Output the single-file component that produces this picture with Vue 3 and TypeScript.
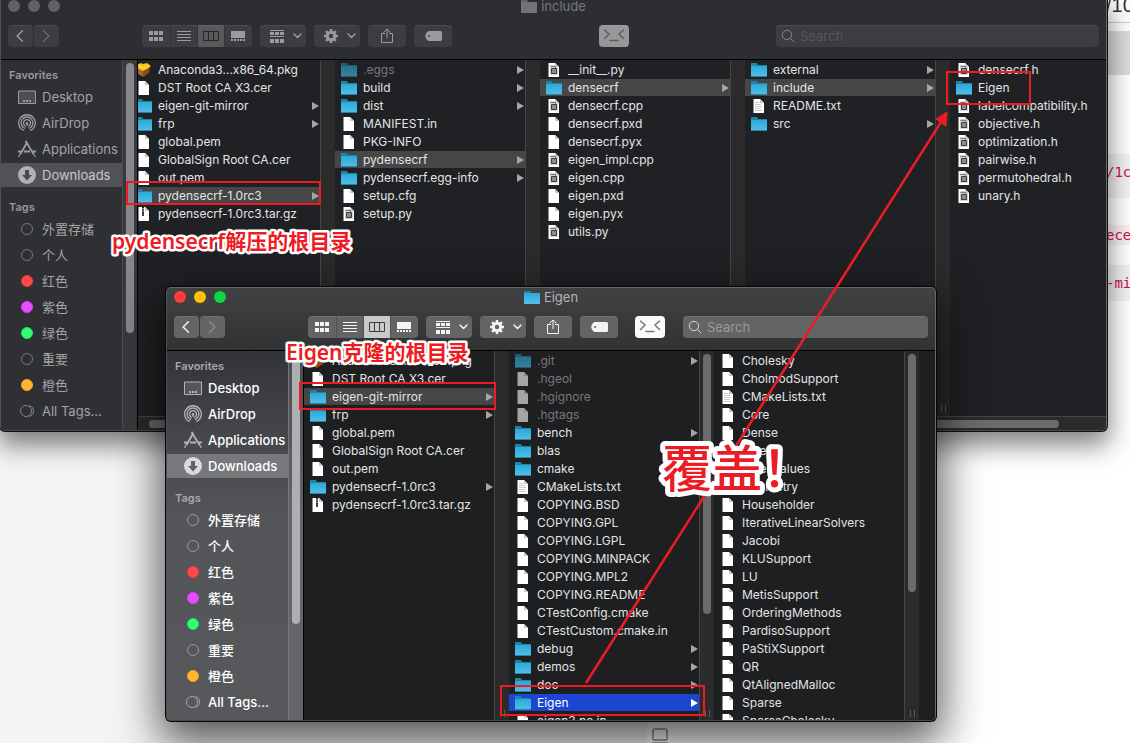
<script setup lang="ts">
type Kind = 'folder' | 'file' | 'code' | 'text' | 'zip' | 'pkg'
interface Entry { name: string; kind: Kind; arrow?: boolean; dim?: boolean; selected?: boolean; active?: boolean }
interface Column { entries: Entry[]; bar?: 'long' | 'short'; grip?: boolean }
interface FinderWindow { id: string; title: string; front: boolean; columns: Column[] }

const dir = (name: string, extra: Partial<Entry> = {}): Entry => ({ name, kind: 'folder', arrow: true, ...extra })
const doc = (name: string, kind: Kind = 'file', extra: Partial<Entry> = {}): Entry => ({ name, kind, ...extra })
const docs = (...names: string[]): Entry[] => names.map((n) => doc(n))

const downloads = (selected: string): Entry[] => [
  doc('Anaconda3...x86_64.pkg', 'pkg'),
  doc('DST Root CA X3.cer'),
  dir('eigen-git-mirror', { selected: selected === 'eigen-git-mirror' }),
  dir('frp'),
  ...docs('global.pem', 'GlobalSign Root CA.cer', 'out.pem'),
  dir('pydensecrf-1.0rc3', { selected: selected === 'pydensecrf-1.0rc3' }),
  doc('pydensecrf-1.0rc3.tar.gz', 'zip'),
]

const windows: FinderWindow[] = [
  {
    id: 'back',
    title: 'include',
    front: false,
    columns: [
      { entries: downloads('pydensecrf-1.0rc3') },
      {
        entries: [
          dir('.eggs', { dim: true }), dir('build'), dir('dist'),
          ...docs('MANIFEST.in', 'PKG-INFO'),
          dir('pydensecrf', { selected: true }), dir('pydensecrf.egg-info'),
          doc('setup.cfg'), doc('setup.py', 'code'),
        ],
      },
      {
        entries: [
          doc('__init__.py', 'code'), dir('densecrf', { selected: true }), doc('densecrf.cpp', 'code'),
          ...docs('densecrf.pxd', 'densecrf.pyx'),
          doc('eigen_impl.cpp', 'code'), doc('eigen.cpp', 'code'),
          ...docs('eigen.pxd', 'eigen.pyx'), doc('utils.py', 'code'),
        ],
      },
      { grip: true, entries: [dir('external'), dir('include', { selected: true }), doc('README.txt', 'text'), dir('src')] },
      {
        entries: [
          doc('densecrf.h', 'code'), dir('Eigen', { arrow: false }),
          ...['labelcompatibility.h', 'objective.h', 'optimization.h', 'pairwise.h', 'permutohedral.h', 'unary.h'].map((n) => doc(n, 'code')),
        ],
      },
    ],
  },
  {
    id: 'front',
    title: 'Eigen',
    front: true,
    columns: [
      { grip: true, entries: downloads('eigen-git-mirror') },
      {
        bar: 'long',
        grip: true,
        entries: [
          dir('.git', { dim: true }),
          ...['.hgeol', '.hgignore', '.hgtags'].map((n) => doc(n, 'file', { dim: true })),
          dir('bench'), dir('blas'), dir('cmake'), doc('CMakeLists.txt', 'text'),
          ...docs('COPYING.BSD', 'COPYING.GPL', 'COPYING.LGPL', 'COPYING.MINPACK', 'COPYING.MPL2', 'COPYING.README', 'CTestConfig.cmake', 'CTestCustom.cmake.in'),
          dir('debug'), dir('demos'), dir('doc'), dir('Eigen', { active: true }), doc('eigen3.pc.in'),
        ],
      },
      {
        bar: 'short',
        grip: true,
        entries: [
          ...docs('Cholesky', 'CholmodSupport'), doc('CMakeLists.txt', 'text'),
          ...docs('Core', 'Dense', 'Eigen', 'Eigenvalues', 'Geometry', 'Householder', 'IterativeLinearSolvers', 'Jacobi', 'KLUSupport', 'LU',
            'MetisSupport', 'OrderingMethods', 'PardisoSupport', 'PaStiXSupport', 'QR', 'QtAlignedMalloc', 'Sparse', 'SparseCholesky'),
        ],
      },
      { entries: [] },
    ],
  },
]

const favorites = ['Desktop', 'AirDrop', 'Applications', 'Downloads']
const tags = [
  { name: '外置存储', color: 'none' },
  { name: '个人', color: 'none' },
  { name: '红色', color: 'red' },
  { name: '紫色', color: 'purple' },
  { name: '绿色', color: 'green' },
  { name: '重要', color: 'none' },
  { name: '橙色', color: 'orange' },
]
</script>

<template>
  <main class="desktop">
    <svg class="defs" width="0" height="0" aria-hidden="true">
      <defs>
        <linearGradient id="folder-fill" x1="0" y1="0" x2="0" y2="1">
          <stop offset="0" stop-color="#27aadb" />
          <stop offset="1" stop-color="#58bfe2" />
        </linearGradient>
      </defs>
    </svg>

    <article class="page">
      <p class="heading">/10</p>
      <div class="bar"></div>
      <pre class="code tall">/1c</pre>
      <p class="inline"><code>ece</code></p>
      <pre class="code short">-mi</pre>
    </article>
    <svg class="screen-icon" viewBox="0 0 16 16" aria-hidden="true">
      <rect x="1" y="1" width="14" height="11" rx="1" fill="none" stroke="#555" />
      <path d="M0 15h16" stroke="#777" />
    </svg>

    <section v-for="w in windows" :key="w.id" class="window" :class="w.id" :aria-label="w.title">
      <header class="titlebar">
        <div class="lights">
          <button type="button" class="light close" aria-label="Close"></button>
          <button type="button" class="light minimize" aria-label="Minimize"></button>
          <button type="button" class="light zoom" aria-label="Zoom"></button>
        </div>
        <h1 class="title">
          <svg class="icon" viewBox="0 0 16 16" aria-hidden="true">
            <path class="tab" d="M0 2h6l1 2h9v2H0z" />
            <path class="body" d="M0 4h16v11H0z" />
          </svg>
          <span>{{ w.title }}</span>
        </h1>
        <div class="toolbar">
          <div class="nav">
            <button type="button" class="tool" aria-label="Back">
              <svg viewBox="0 0 26 22"><path d="M15 5.500l-5.500 5.500 5.500 5.500" class="line bold" /></svg>
            </button>
            <button type="button" class="tool off" aria-label="Forward">
              <svg viewBox="0 0 26 22"><path d="M10 5.500l5.500 5.500-5.500 5.500" class="line bold" /></svg>
            </button>
          </div>
          <div class="segments">
            <button type="button" class="tool" aria-label="Icon view">
              <svg viewBox="0 0 28 22"><path class="solid" d="M7 6h4v4H7zm5 0h4v4h-4zm5 0h4v4h-4zM7 12h4v4H7zm5 0h4v4h-4zm5 0h4v4h-4z" /></svg>
            </button>
            <button type="button" class="tool" aria-label="List view">
              <svg viewBox="0 0 26 22"><path class="line" d="M6 6.500h14M6 9.500h14M6 12.500h14M6 15.500h14" /></svg>
            </button>
            <button type="button" class="tool chosen" aria-label="Column view">
              <svg viewBox="0 0 26 22"><path class="line" d="M5.500 6.500h15v9h-15zM10.500 6.500v9M15.500 6.500v9" /></svg>
            </button>
            <button type="button" class="tool" aria-label="Gallery view">
              <svg viewBox="0 0 27 22"><path class="solid" d="M6 6h14v7H6zM6 14h2v2H6zm3 0h2v2H9zm3 0h2v2h-2zm3 0h2v2h-2zm3 0h2v2h-2z" /></svg>
            </button>
          </div>
          <button type="button" class="tool wide" aria-label="Group">
            <svg viewBox="0 0 46 22">
              <path class="line" d="M10 5.500h14M10 11.500h14" />
              <path class="solid" d="M10 7h4v3h-4zm5 0h4v3h-4zm5 0h4v3h-4zM10 14h4v4h-4zm5 0h4v4h-4zm5 0h4v4h-4z" />
              <path class="line bold" d="M34 9l3.500 3.500L41 9" />
            </svg>
          </button>
          <button type="button" class="tool wide" aria-label="Action">
            <svg viewBox="0 0 46 22">
              <circle class="gear-ring" cx="17" cy="11" r="3.700" />
              <path class="gear-teeth" d="M17 4v3M17 15v3M10 11h3M21 11h3M12.050 6.050l2 2M19.950 13.950l2 2M12.050 15.950l2-2M19.950 8.050l2-2" />
              <path class="line bold" d="M34 9l3.500 3.500L41 9" />
            </svg>
          </button>
          <button type="button" class="tool mid" aria-label="Share">
            <svg viewBox="0 0 38 22"><path class="line" d="M17 8.500h-3.500v9h11v-9H21M19 13V4.500M15.500 7.500L19 4l3.500 3.500" /></svg>
          </button>
          <button type="button" class="tool mid" aria-label="Edit tags">
            <svg viewBox="0 0 38 22"><path class="solid" fill-rule="evenodd" d="M15 6h11.500q1.500 0 1.500 1.500v7q0 1.500-1.500 1.500H15q-1 0-2-1l-1.500-2.500q-.8-1.500 0-3L13 7q.8-1 2-1zm0 4a1 1 0 1 0 0 2 1 1 0 0 0 0-2z" /></svg>
          </button>
          <button type="button" class="tool face" aria-label="Open in terminal">
            <svg viewBox="0 0 30 22"><path d="M5.500 5l4.500 4-4.500 4.500M24.500 5L20 9l4.500 4.500M11 15.500h8" /></svg>
          </button>
          <label class="search">
            <svg viewBox="0 0 14 14" aria-hidden="true"><circle cx="6" cy="6" r="4.700" /><path d="M9.500 9.500l3.700 3.700" /></svg>
            <input type="search" placeholder="Search" aria-label="Search" />
          </label>
        </div>
      </header>

      <div class="content">
        <nav class="sidebar" aria-label="Sidebar">
          <h2>Favorites</h2>
          <ul>
            <li v-for="f in favorites" :key="f">
              <button type="button" class="place" :class="{ current: f === 'Downloads' }">
                <svg v-if="f === 'Desktop'" viewBox="0 0 18 18" aria-hidden="true">
                  <path d="M.5 3h17v12.500H.5z" fill="#88888a" fill-opacity=".35" stroke="currentColor" />
                  <path d="M5 12h2v2H5zm3 0h2v2H8zm3 0h2v2h-2z" fill="currentColor" />
                </svg>
                <svg v-else-if="f === 'AirDrop'" viewBox="0 0 18 18" aria-hidden="true" fill="none" stroke="currentColor" stroke-width="1.300">
                  <path d="M5 16.300a8.300 8.300 0 1 1 8 0M6 14a5.900 5.900 0 1 1 6 0M7 11.900a3.500 3.500 0 1 1 4 0" />
                  <circle cx="9" cy="9.200" r="1.200" fill="currentColor" stroke="none" />
                  <path d="M9 10l-4 7M9 10l4 7" stroke-width=".8" />
                </svg>
                <svg v-else-if="f === 'Applications'" viewBox="0 0 18 18" aria-hidden="true" fill="none" stroke="currentColor" stroke-width="1.800">
                  <path d="M9 2.500L2.500 14M7.500 1q1.500 1.500 2.300 3.700L15.500 14M0 11.500h3.500M6 11.500h6M14.500 11.500H18" />
                  <path d="M2.500 13l-2 4M15 13l2.500 4" stroke-width="1.200" />
                </svg>
                <svg v-else viewBox="0 0 18 18" aria-hidden="true">
                  <circle cx="9" cy="9" r="9" class="disc" />
                  <path d="M7 4h4v5h3l-5 5.500L4 9h3z" class="cut" />
                </svg>
                <span>{{ f }}</span>
              </button>
            </li>
          </ul>
          <h2>Tags</h2>
          <ul>
            <li v-for="t in tags" :key="t.name">
              <button type="button" class="place"><i class="dot" :class="t.color"></i><span>{{ t.name }}</span></button>
            </li>
            <li>
              <button type="button" class="place">
                <svg viewBox="0 0 18 18" aria-hidden="true" fill="none" stroke="currentColor" opacity=".8">
                  <circle cx="8" cy="9" r="5.500" />
                  <path d="M11 3.600a5.500 5.500 0 0 1 0 10.800" />
                </svg>
                <span>All Tags...</span>
              </button>
            </li>
          </ul>
        </nav>
        <div class="track"><div class="thumb"></div></div>

        <div class="browser">
          <div class="columns">
            <div v-for="(c, i) in w.columns" :key="i" class="column">
              <ul class="list">
                <li v-for="e in c.entries" :key="e.name">
                  <button type="button" class="row" :class="{ selected: e.selected, active: e.active, dim: e.dim }">
                    <svg class="icon" viewBox="0 0 16 16" aria-hidden="true">
                      <template v-if="e.kind === 'folder'">
                        <path d="M0 1h6l1 2h9v2H0z" fill="#2383a6" />
                        <path d="M0 4h16v11H0z" fill="url(#folder-fill)" />
                        <path d="M0 14h16v1H0z" fill="#2785a7" />
                      </template>
                      <template v-else-if="e.kind === 'pkg'">
                        <path d="M1 5l6 3v7l-6-4z" fill="#a8672a" />
                        <path d="M14 5L7 8v7l6-4z" fill="#8a4a1c" />
                        <path d="M0 3l5-2 2 1 4-1 4 3-4 3-4 2-6-3z" fill="#f6c51e" />
                        <path d="M3 4l5 2 5-2" fill="none" stroke="#ffe36b" />
                      </template>
                      <template v-else>
                        <path d="M2.500 1H9l4 4v10H2.500z" fill="#fff" />
                        <path d="M9 1v4h4z" fill="#c9c9c9" />
                        <g v-if="e.kind === 'code'">
                          <path d="M4 3h5v2h3v8H4z" fill="#d6d6d6" />
                          <path d="M4.500 4.500h5v5" fill="none" stroke="#777" />
                          <path d="M5.500 6.500h5v5h-5z" fill="#8c8c8c" stroke="#3c3c3c" />
                        </g>
                        <path v-if="e.kind === 'text'" d="M4 4.500h4M4 6.500h6M4 8.500h7M4 10.500h6M4 12.500h7" stroke="#c9c9c9" />
                        <path v-if="e.kind === 'zip'" d="M7 1v6" stroke="#222" stroke-width="2" stroke-dasharray="1.500 .7" />
                        <path v-if="e.kind === 'zip'" d="M6 7h2v3H6z" fill="#444" />
                      </template>
                    </svg>
                    <span class="name">{{ e.name }}</span>
                    <svg v-if="e.arrow" class="arrow" viewBox="0 0 7 8" aria-hidden="true"><path d="M0 0l7 4-7 4z" /></svg>
                  </button>
                </li>
              </ul>
              <div v-if="i < w.columns.length - 1" class="gutter">
                <div v-if="c.bar" class="thumb" :class="c.bar"></div>
                <div v-if="c.grip" class="grip"></div>
              </div>
            </div>
          </div>
          <div v-if="!w.front" class="hbar"><div class="hthumb"></div></div>
        </div>
      </div>
    </section>

    <div class="notes">
      <div class="box source-root"></div>
      <div class="box target"></div>
      <div class="box clone-root"></div>
      <div class="box chosen-folder"></div>
      <svg class="overlay">
        <path d="M586 683L941 122" class="shaft" />
        <path d="M947 112l-1 14-5-3-5-4z" class="head" />
        <text class="note" x="112" y="249">pydensecrf解压的根目录</text>
        <text class="note" x="286" y="360">Eigen克隆的根目录</text>
        <text class="note big" x="662" y="487">覆盖！</text>
      </svg>
    </div>
  </main>
</template>

<style>
body { margin: 0; overflow: hidden; }
</style>

<style scoped>
.desktop {
  position: relative;
  min-height: 100vh;
  overflow: hidden;
  background: linear-gradient(90deg, #f4f4f4 647px, #fff 647px);
  font-family: Inter, "Noto Sans CJK SC", sans-serif;
  font-size: 12px;
}
.defs { position: absolute; }
h1, h2, p, ul, pre { margin: 0; padding: 0; font-weight: inherit; font-size: inherit; }
ul { list-style: none; }
button { appearance: none; border: 0; margin: 0; padding: 0; background: none; font: inherit; color: inherit; }
svg { display: block; }

/* article behind the windows */
.page { margin-left: auto; width: 24px; height: 431px; overflow: hidden; font-family: "DejaVu Sans Mono", monospace; color: #d0103f; }
.heading { height: 22px; border-bottom: 1px solid #ccc; color: #333; font: 20px/10px "Liberation Sans", sans-serif; }
.bar { height: 44px; margin-top: 8px; background: #ddd; }
.code { font: 14px/36px "DejaVu Sans Mono", monospace; background: #f2f2f2; }
.tall { height: 44px; margin-top: 79px; }
.inline { margin-top: 27px; font-size: 14px; line-height: 20px; }
.inline code { display: block; background: #f9f2f4; font: 14px/20px "DejaVu Sans Mono", monospace; }
.short { margin-top: 20px; }
.screen-icon { position: absolute; left: 652px; bottom: -1px; width: 16px; height: 16px; }

/* windows */
.window {
  --ink: #9b9b9d;
  --tool: #3c3d40;
  --head: #2d2e31;
  --list: #202124;
  --side-text: #a4a4a6;
  position: absolute;
  box-sizing: border-box;
  display: flex;
  flex-direction: column;
  overflow: hidden;
  border-radius: 5px;
  background: var(--list);
}
.back { left: 0; right: 23px; top: -4px; height: 435px; box-shadow: 0 0 0 1px #111, 0 12px 26px 2px rgba(0, 0, 0, .5); }
.front {
  --ink: #f4f4f4;
  --tool: #636466;
  --list: #1e1f21;
  --side-text: #fff;
  left: 166px; right: 194px; top: 287px; bottom: 22px;
  box-shadow: 0 0 0 1px #050505, 0 16px 44px 6px rgba(0, 0, 0, .65);
}
.window::after { content: ""; position: absolute; inset: 0; border: 1px solid #68686a; border-left-color: #505153; border-bottom-color: #48494b; border-radius: 5px; pointer-events: none; }
.titlebar { box-sizing: border-box; flex: none; height: 64px; border-bottom: 1px solid #000; background: var(--head); position: relative; }
.front .titlebar { background: linear-gradient(#414244, #313234); }
.lights { position: absolute; left: 8px; top: 4px; display: flex; gap: 8px; }
.light { width: 12px; height: 12px; border-radius: 50%; background: #616163; }
.front .close { background: #ff3b3f; }
.front .minimize { background: #ffc107; }
.front .zoom { background: #09d944; }
.title { display: flex; justify-content: center; align-items: center; gap: 4px; height: 20px; font-size: 13px; line-height: 12px; color: #77787a; }
.front .title { color: #b4b4b5; }
.icon { width: 16px; height: 16px; flex: none; }
.tab { fill: #666769; }
.body { fill: #727375; }
.front .tab { fill: #2383a6; }
.front .body { fill: url(#folder-fill); }
.toolbar { display: flex; height: 22px; margin-top: 9px; padding: 0 8px; gap: 8px; }
.nav { display: flex; gap: 1px; margin-right: 75px; }
.tool { height: 22px; width: 25px; border-radius: 4px; background: var(--tool); color: var(--ink); flex: none; box-shadow: inset 0 1px rgba(255, 255, 255, .07); }
.tool svg { width: 100%; height: 22px; }
.off { color: #68696b; }
.front .off { color: #8b8c8e; }
.line { fill: none; stroke: currentColor; stroke-width: 1; }
.bold { stroke-width: 1.500; stroke-linecap: round; stroke-linejoin: round; }
.solid { fill: currentColor; }
.gear-ring { fill: none; stroke: currentColor; stroke-width: 3; }
.gear-teeth { fill: none; stroke: currentColor; stroke-width: 2.500; }
.segments { display: flex; border-radius: 4px; overflow: hidden; }
.segments .tool { width: 27px; border-radius: 0; border-right: 1px solid #343538; box-sizing: border-box; }
.segments .tool:first-child { width: 29px; }
.segments .tool:last-child { border-right: 0; }
.front .segments .tool { border-right-color: #505153; }
.segments .chosen { background: #58595b; color: #27282a; }
.front .segments .chosen { background: #c9c9ca; color: #3c3c3e; }
.wide { width: 46px; }
.mid { width: 38px; }
.face { width: 30px; margin: 0 139px; background: #97979a; color: #5e5e60; }
.face path { fill: none; stroke: currentColor; stroke-width: 1.500; stroke-linecap: round; }
.front .face { margin: 0 10px 0 9px; background: #fafafa; color: #777; }
.search { flex: 1; min-width: 0; display: flex; align-items: center; gap: 5px; padding-left: 5px; border-radius: 4px; background: var(--tool); box-shadow: inset 0 1px rgba(255, 255, 255, .08); }
.search svg { width: 14px; height: 14px; flex: none; fill: none; stroke: #858588; }
.front .search svg { stroke: #d5d5d6; }
.search input { flex: 1; min-width: 0; border: 0; outline: 0; padding: 0; background: none; color: var(--ink); font: 13px Inter, sans-serif; appearance: none; }
.search input::placeholder { color: #56575a; opacity: 1; }
.front .search input::placeholder { color: #98999b; }

.content { flex: 1; min-height: 0; display: flex; }
.sidebar { width: 122px; flex: none; overflow: hidden; background: #2f3033; color: var(--side-text); font-size: 13px; }
.front .sidebar { background: linear-gradient(#333437, #48494c 26%, #545558 45%, #57585b); font-weight: 500; }
.sidebar h2 { font-size: 11px; line-height: 16px; font-weight: 600; color: #98999b; padding: 7px 0 2px 9px; }
.sidebar ul + h2 { padding-top: 10px; }
.front .sidebar h2 { color: #a9a9ac; }
.sidebar li { margin-bottom: 2px; }
.place { width: 100%; height: 24px; display: flex; align-items: center; gap: 6px; padding-left: 18px; text-align: left; line-height: 18px; white-space: nowrap; }
.place svg { width: 18px; height: 18px; flex: none; color: #9b9b9e; }
.front .place svg { color: #b4b4b6; }
.current { background: #515255; color: #c8c8c9; }
.front .current { background: #77787b; color: #fff; }
.disc { fill: #b1b1b4; }
.cut { fill: #4a4b4e; }
.front .disc { fill: #dadadc; }
.front .cut { fill: #606164; }
.dot { box-sizing: border-box; width: 12px; height: 12px; margin: 0 3px; border-radius: 50%; border: 1px solid #77787a; flex: none; }
.front .dot { border-color: #98999b; }
.window .red { background: #ff4a4a; border-color: #ff3535; }
.window .purple { background: #e650ff; border-color: #dd3dfa; }
.window .green { background: #30ff73; border-color: #1fe55e; }
.window .orange { background: #ffb532; border-color: #ffa717; }
.track { box-sizing: border-box; width: 16px; flex: none; padding: 3px 3px 0 3px; border-left: 1px solid #4b4c4f; border-right: 1px solid #000; background: #393a3d; }
.front .track { background: linear-gradient(#4b4c4f, #646568 45%); border-left-color: #77787a; }
.thumb { box-sizing: border-box; height: 270px; width: 8px; border-radius: 4px; background: #87888b; }
.front .thumb { background: #aeafb2; }

.browser { flex: 1; min-width: 0; display: flex; flex-direction: column; }
.columns { flex: 1; min-height: 0; display: flex; overflow: hidden; }
.column { width: 205px; flex: none; display: flex; overflow: hidden; }
.column:last-child { flex: 1; width: auto; }
.back .column:first-child { margin-left: -8px; }
.list { flex: 1; min-width: 0; padding-top: 1px; }
.list li { padding-bottom: 1px; }
.row { width: 100%; height: 17px; display: flex; align-items: center; padding: 0 1px 0 6px; color: #e4e4e4; text-align: left; white-space: nowrap; }
.name { flex: 1; margin-left: 6px; line-height: 17px; }
.arrow { width: 7px; height: 8px; fill: #a6a6a7; }
.selected { background: #464646; }
.active { background: #1a46d2; color: #fff; }
.active .arrow { fill: #fff; }
.dim .name { color: #77787a; }
.dim .icon { opacity: .6; }
.gutter { box-sizing: border-box; width: 15px; flex: none; display: flex; flex-direction: column; align-items: center; padding-top: 3px; border-left: 1px solid #454545; background: #2b2b2b; }
.window .gutter .thumb { background: #6b6b6b; }
.window .long { height: 260px; }
.window .short { height: 238px; margin: 0; }
.grip { box-sizing: border-box; width: 5px; height: 7px; margin: auto 0 4px; border: solid #5c5c5c; border-width: 0 1px; }
.hbar { height: 15px; box-sizing: border-box; padding: 3px 48px 0 11px; border-top: 1px solid #454545; background: #2b2b2b; }
.hthumb { height: 8px; border-radius: 4px; background: #6b6b6b; }

/* annotations */
.notes { position: absolute; inset: 0; pointer-events: none; }
.box { position: absolute; box-sizing: border-box; border: 2px solid #ed1c24; }
.source-root { left: 126px; top: 181px; width: 195px; height: 24px; }
.target { left: 946px; top: 71px; width: 85px; height: 34px; }
.clone-root { left: 299px; top: 382px; width: 197px; height: 28px; }
.chosen-folder { left: 500px; top: 685px; width: 205px; height: 31px; }
.overlay { position: absolute; inset: 0; width: 100%; height: 100%; }
.shaft { fill: none; stroke: #ed1c24; stroke-width: 2.500; }
.head { fill: #ed1c24; stroke: #ed1c24; }
.note {
  fill: #ed1c24;
  font: 600 21px "Noto Sans", "Noto Sans CJK SC", sans-serif;
  stroke: #fff;
  stroke-width: 5px;
  stroke-linejoin: round;
  paint-order: stroke fill;
}
.big { font-size: 50px; font-weight: 500; stroke-width: 10px; }
</style>
